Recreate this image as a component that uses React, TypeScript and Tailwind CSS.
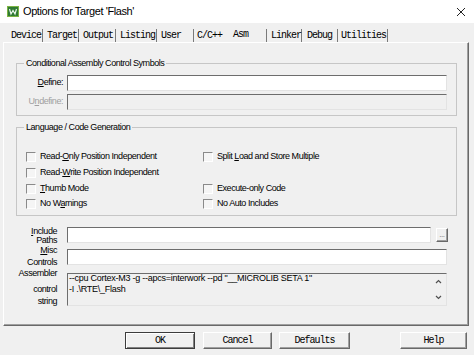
import React from "react";

const tabs = [
  { label: "Device", cls: "w-[35px] pl-[3px] border-r" },
  { label: "Target", cls: "w-[36px] pl-[4px] border-r" },
  { label: "Output", cls: "w-[37px] pl-[4px] border-r" },
  { label: "Listing", cls: "w-[41px] pl-[4px] border-r" },
  { label: "User", cls: "w-[37px] pl-[4px] border-r" },
  { label: "C/C++", cls: "w-[29px] pl-[3px]" },
  { label: "Asm", cls: "w-[44px] pl-[10px] border-r pb-[2px]" },
  { label: "Linker", cls: "w-[35px] pl-[4px] border-r" },
  { label: "Debug", cls: "w-[36px] pl-[5px] border-r" },
  { label: "Utilities", cls: "w-[50px] pl-[3px] border-r" },
];

const sunken =
  "border border-t-[#6d6d6d] border-l-[#6d6d6d] border-b-[#e3e3e3] border-r-[#e3e3e3]";

function Check({ children }: { children: React.ReactNode }) {
  return (
    <div className="flex items-center gap-[4px]">
      <span className="w-[10px] h-[10px] border border-t-[#8a8a8a] border-l-[#8a8a8a] border-b-white border-r-white bg-[#f5f5f5]" />
      <span>{children}</span>
    </div>
  );
}

function Button({ label, w, def }: { label: string; w: string; def?: boolean }) {
  return (
    <div
      className={
        "h-[17px] flex items-center justify-center bg-[#f0f0f0] font-['Liberation_Mono',monospace] text-[10px] tracking-[-1px] text-black " +
        w +
        (def
          ? " border border-[#3c3c3c] shadow-[inset_1px_1px_0_#fff,inset_-1px_-1px_0_#808080]"
          : " border border-t-white border-l-white border-b-[#696969] border-r-[#696969] shadow-[inset_-1px_-1px_0_#a0a0a0]")
      }
    >
      {label}
    </div>
  );
}

export default function App() {
  return (
    <div className="w-[474px] h-[355px] bg-[#f0f0f0] overflow-hidden flex flex-col font-['Liberation_Sans',Arial,sans-serif] text-black">
      {/* title bar */}
      <div className="h-[23px] bg-white flex items-center pl-[7px] pr-[8px]">
        <svg width="12" height="11" viewBox="0 0 12 11">
          <rect x="0.5" y="0.5" width="11" height="10" fill="#2f7a33" stroke="#7cb342" />
          <path d="M2.5 3 L4 8 L6 4.5 L8 8 L9.5 3" fill="none" stroke="#e8f5e9" strokeWidth="1.2" />
        </svg>
        <span className="ml-[4px] text-[11px] tracking-[-0.4px]">Options for Target 'Flash'</span>
        <svg className="ml-auto" width="10" height="10" viewBox="0 0 10 10">
          <path d="M1 1 L9 9 M9 1 L1 9" stroke="#222" strokeWidth="1" />
        </svg>
      </div>

      {/* tabs */}
      <div className="h-[19px] pt-[6px] pl-[8px] flex font-['Liberation_Mono',monospace] text-[10px] tracking-[-1px]">
        {tabs.map((t) => (
          <div key={t.label} className={"h-[13px] flex items-center border-[#7a7a7a] " + t.cls}>
            {t.label}
          </div>
        ))}
      </div>

      {/* tab page */}
      <div className="ml-[3px] w-[466px] h-[284px] border border-t-white border-l-white border-b-[#696969] border-r-[#696969] shadow-[inset_-1px_-1px_0_#a0a0a0] flex flex-col text-[9px] tracking-[-0.45px]">
        <fieldset className="mt-[14px] ml-[12px] w-[441px] border border-[#c6c6c6]">
          <legend className="ml-[7px] px-[2px] leading-[12px]">Conditional Assembly Control Symbols</legend>
          <div className="pt-[6px] pb-[5px] grid grid-cols-[46px_380px] gap-x-[4px] gap-y-[3px] items-center">
            <span className="text-right">
              <u>D</u>efine:
            </span>
            <div className={"h-[16px] bg-white " + sunken} />
            <span className="text-right text-[#a0a0a0]">
              U<u>n</u>define:
            </span>
            <div className={"h-[16px] bg-[#f0f0f0] " + sunken} />
          </div>
        </fieldset>

        <fieldset className="mt-[5px] ml-[12px] w-[441px] border border-[#c6c6c6]">
          <legend className="ml-[7px] px-[2px] leading-[12px]">Language / Code Generation</legend>
          <div className="pt-[16px] pb-[3px] pl-[9px] grid grid-cols-[177px_1fr] grid-rows-[16px_16px_15px_16px] items-center">
            <Check>
              Read-<u>O</u>nly Position Independent
            </Check>
            <Check>
              Split <u>L</u>oad and Store Multiple
            </Check>
            <Check>
              Read-<u>W</u>rite Position Independent
            </Check>
            <div />
            <Check>
              <u>T</u>humb Mode
            </Check>
            <Check>Execute-only Code</Check>
            <Check>
              No W<u>a</u>rnings
            </Check>
            <Check>No Auto Includes</Check>
          </div>
        </fieldset>

        <div className="mt-[11px] flex flex-col">
          <div className="flex h-[19px]">
            <div className="w-[53px] flex flex-col items-end leading-[9px]">
              <span>
                <u>I</u>nclude
              </span>
              <span>Paths</span>
            </div>
            <div className={"ml-[10px] w-[364px] h-[16px] bg-white " + sunken} />
            <div className="ml-[5px] mt-[1px] w-[12px] h-[14px] flex items-end justify-center pb-[2px] text-[8px] leading-[8px] text-[#707070] border border-t-white border-l-white border-b-[#696969] border-r-[#696969] shadow-[inset_-1px_-1px_0_#a0a0a0]">
              ...
            </div>
          </div>

          <div className="flex h-[23px]">
            <div className="w-[53px] h-[21px] flex flex-col items-end justify-between leading-[9px]">
              <span>
                <u>M</u>isc
              </span>
              <span>Controls</span>
            </div>
            <div className={"ml-[10px] mt-[3px] w-[380px] h-[16px] bg-white " + sunken} />
          </div>

          <div className="flex">
            <div className="w-[53px] flex flex-col items-end leading-[9px]">
              <span>Assembler</span>
              <span className="mt-[7px]">control</span>
              <span className="mt-[3px]">string</span>
            </div>
            <div className={"ml-[10px] mt-[4px] w-[380px] h-[33px] bg-[#f0f0f0] flex " + sunken}>
              <div className="flex-1 pl-[1px] -mt-[1px] leading-[11px] tracking-[-0.25px] whitespace-pre">
                <div>--cpu Cortex-M3 -g --apcs=interwork --pd "__MICROLIB SETA 1"</div>
                <div>-I .\RTE\_Flash</div>
              </div>
              <div className="w-[13px] flex flex-col items-center justify-between py-[5px] mr-[1px]">
                <svg width="7" height="5" viewBox="0 0 7 5">
                  <path d="M1 4 L3.5 1.5 L6 4" fill="none" stroke="#505050" strokeWidth="1.2" />
                </svg>
                <svg width="7" height="5" viewBox="0 0 7 5">
                  <path d="M1 1 L3.5 3.5 L6 1" fill="none" stroke="#505050" strokeWidth="1.2" />
                </svg>
              </div>
            </div>
          </div>
        </div>
      </div>

      {/* buttons */}
      <div className="mt-[6px] ml-[125px] flex">
        <Button label="OK" w="w-[70px]" def />
        <div className="ml-[8px]">
          <Button label="Cancel" w="w-[69px]" />
        </div>
        <div className="ml-[7px]">
          <Button label="Defaults" w="w-[71px]" />
        </div>
        <div className="ml-[50px]">
          <Button label="Help" w="w-[67px]" />
        </div>
      </div>
    </div>
  );
}
